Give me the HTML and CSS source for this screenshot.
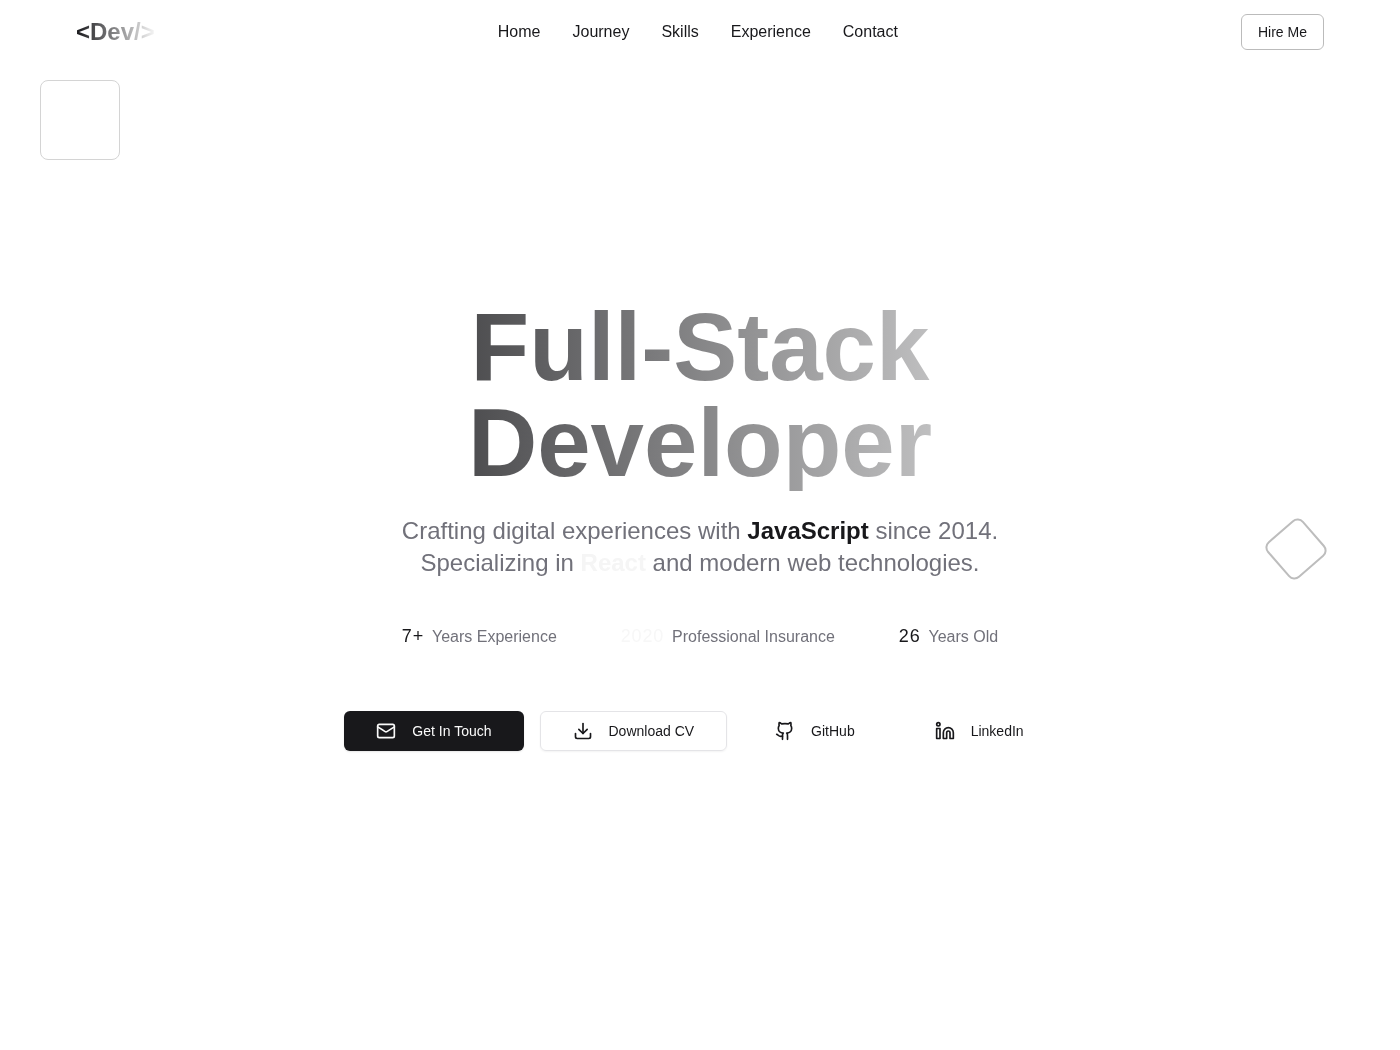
FILE: index.html
```html
<!DOCTYPE html>
<html lang="en">
<head>
    <meta charset="UTF-8">
    <meta name="viewport" content="width=device-width, initial-scale=1.0">
    <title>Full-Stack Developer</title>
    <link rel="stylesheet" href="styles.css">
</head>
<body>

    <header class="navbar">
        <a class="logo" href="#">&lt;Dev/&gt;</a>
        <nav class="nav-links">
            <a href="#">Home</a>
            <a href="#">Journey</a>
            <a href="#">Skills</a>
            <a href="#">Experience</a>
            <a href="#">Contact</a>
        </nav>
        <button class="hire-btn">Hire Me</button>
    </header>

    <!-- Floating shapes -->
    <div class="shape shape-square"></div>
    <div class="shape shape-diamond"></div>

    <main class="hero">
        <h1 class="hero-title">Full-Stack<br>Developer</h1>
        <p class="hero-sub">
            Crafting digital experiences with <strong>JavaScript</strong> since 2014.<br>
            Specializing in <strong class="faded">React</strong> and modern web technologies.
        </p>

        <div class="stats">
            <div class="stat"><span class="stat-num">7+</span><span class="stat-label">Years Experience</span></div>
            <div class="stat"><span class="stat-num faded">2020</span><span class="stat-label">Professional Insurance</span></div>
            <div class="stat"><span class="stat-num">26</span><span class="stat-label">Years Old</span></div>
        </div>

        <div class="actions">
            <a class="btn btn-dark" href="#">
                <svg class="icon" viewBox="0 0 24 24"><rect x="2" y="4" width="20" height="16" rx="2"/><path d="m22 7-8.97 5.7a1.94 1.94 0 0 1-2.06 0L2 7"/></svg>
                Get In Touch
            </a>
            <a class="btn btn-light" href="#">
                <svg class="icon" viewBox="0 0 24 24"><path d="M21 15v4a2 2 0 0 1-2 2H5a2 2 0 0 1-2-2v-4"/><path d="m7 10 5 5 5-5"/><path d="M12 15V3"/></svg>
                Download CV
            </a>
            <a class="btn btn-ghost" href="#">
                <svg class="icon" viewBox="0 0 24 24"><path d="M15 22v-4a4.8 4.8 0 0 0-1-3.5c3 0 6-2 6-5.5.08-1.25-.27-2.48-1-3.5.28-1.15.28-2.35 0-3.5 0 0-1 0-3 1.5-2.64-.5-5.36-.5-8 0C6 2 5 2 5 2c-.3 1.15-.3 2.35 0 3.5A5.403 5.403 0 0 0 4 9c0 3.5 3 5.5 6 5.5-.39.49-.68 1.05-.85 1.65-.17.6-.22 1.23-.15 1.85v4"/><path d="M9 18c-4.51 2-5-2-7-2"/></svg>
                GitHub
            </a>
            <a class="btn btn-ghost" href="#">
                <svg class="icon" viewBox="0 0 24 24"><path d="M16 8a6 6 0 0 1 6 6v7h-4v-7a2 2 0 0 0-2-2 2 2 0 0 0-2 2v7h-4v-7a6 6 0 0 1 6-6z"/><rect x="2" y="9" width="4" height="12"/><circle cx="4" cy="4" r="2"/></svg>
                LinkedIn
            </a>
        </div>
    </main>

</body>
</html>
```

FILE: styles.css
```css
/* General */
body {
    margin: 0;
    height: 1050px;
    overflow: hidden;
    background-color: #fff;
    color: #18181b;
    font-family: "Liberation Sans", Arial, sans-serif;
}

a {
    color: inherit;
    text-decoration: none;
}

/* Navbar */
.navbar {
    display: flex;
    justify-content: space-between;
    align-items: center;
    height: 63px;
    padding: 0 76px;
    will-change: transform;
}

.logo {
    font-size: 24px;
    font-weight: 700;
    background: linear-gradient(90deg, #18181b, #fff 104%);
    -webkit-background-clip: text;
    background-clip: text;
    color: transparent;
}

.nav-links {
    display: flex;
    gap: 32px;
    font-size: 16px;
}

.hire-btn {
    width: 83px;
    height: 36px;
    padding: 0;
    background-color: #fff;
    color: #18181b;
    border: 1px solid #bbb;
    border-radius: 6px;
    font-family: inherit;
    font-size: 14px;
}

/* Floating shapes */
.shape {
    position: absolute;
    box-sizing: border-box;
}

.shape-square {
    left: 40px;
    top: 80px;
    width: 80px;
    height: 80px;
    border: 1px solid #d4d4d4;
    border-radius: 8px;
}

.shape-diamond {
    left: 1272px;
    top: 525px;
    width: 48px;
    height: 48px;
    border: 2px solid #bdbdbd;
    border-radius: 8px;
    transform: rotate(49deg);
}

/* Hero */
.hero {
    display: flex;
    flex-direction: column;
    align-items: center;
    padding-top: 236px;
    text-align: center;
    will-change: transform;
}

.hero-title {
    margin: 0;
    width: 896px;
    font-size: 96px;
    line-height: 96px;
    font-weight: 700;
    background: linear-gradient(90deg, #18181b, #fff 105%);
    -webkit-background-clip: text;
    background-clip: text;
    color: transparent;
}

.hero-sub {
    margin: 24px 0 0;
    font-size: 24px;
    line-height: 32px;
    color: #71717a;
}

.hero-sub strong {
    color: #18181b;
}

.hero-sub strong.faded {
    color: #f5f5f5;
}

/* Stats */
.stats {
    display: flex;
    gap: 64px;
    margin-top: 47px;
}

.stat {
    display: flex;
    align-items: baseline;
    gap: 8px;
}

.stat-num {
    font-size: 18px;
    letter-spacing: 0.8px;
}

.stat-num.faded {
    color: #f7f7f7;
}

.stat-label {
    font-size: 16px;
    color: #71717a;
}

/* Buttons */
.actions {
    display: flex;
    gap: 16px;
    margin-top: 64px;
}

.btn {
    display: flex;
    align-items: center;
    gap: 16px;
    height: 40px;
    padding: 0 32px;
    box-sizing: border-box;
    border-radius: 6px;
    font-size: 14px;
}

.btn-dark {
    background-color: #18181b;
    color: #fafafa;
    box-shadow: 0 1px 2px rgba(0, 0, 0, 0.1);
}

.btn-light {
    border: 1px solid #e4e4e7;
    box-shadow: 0 1px 2px rgba(0, 0, 0, 0.05);
}

.icon {
    width: 20px;
    height: 20px;
    fill: none;
    stroke: currentColor;
    stroke-width: 2;
    stroke-linecap: round;
    stroke-linejoin: round;
}
```
